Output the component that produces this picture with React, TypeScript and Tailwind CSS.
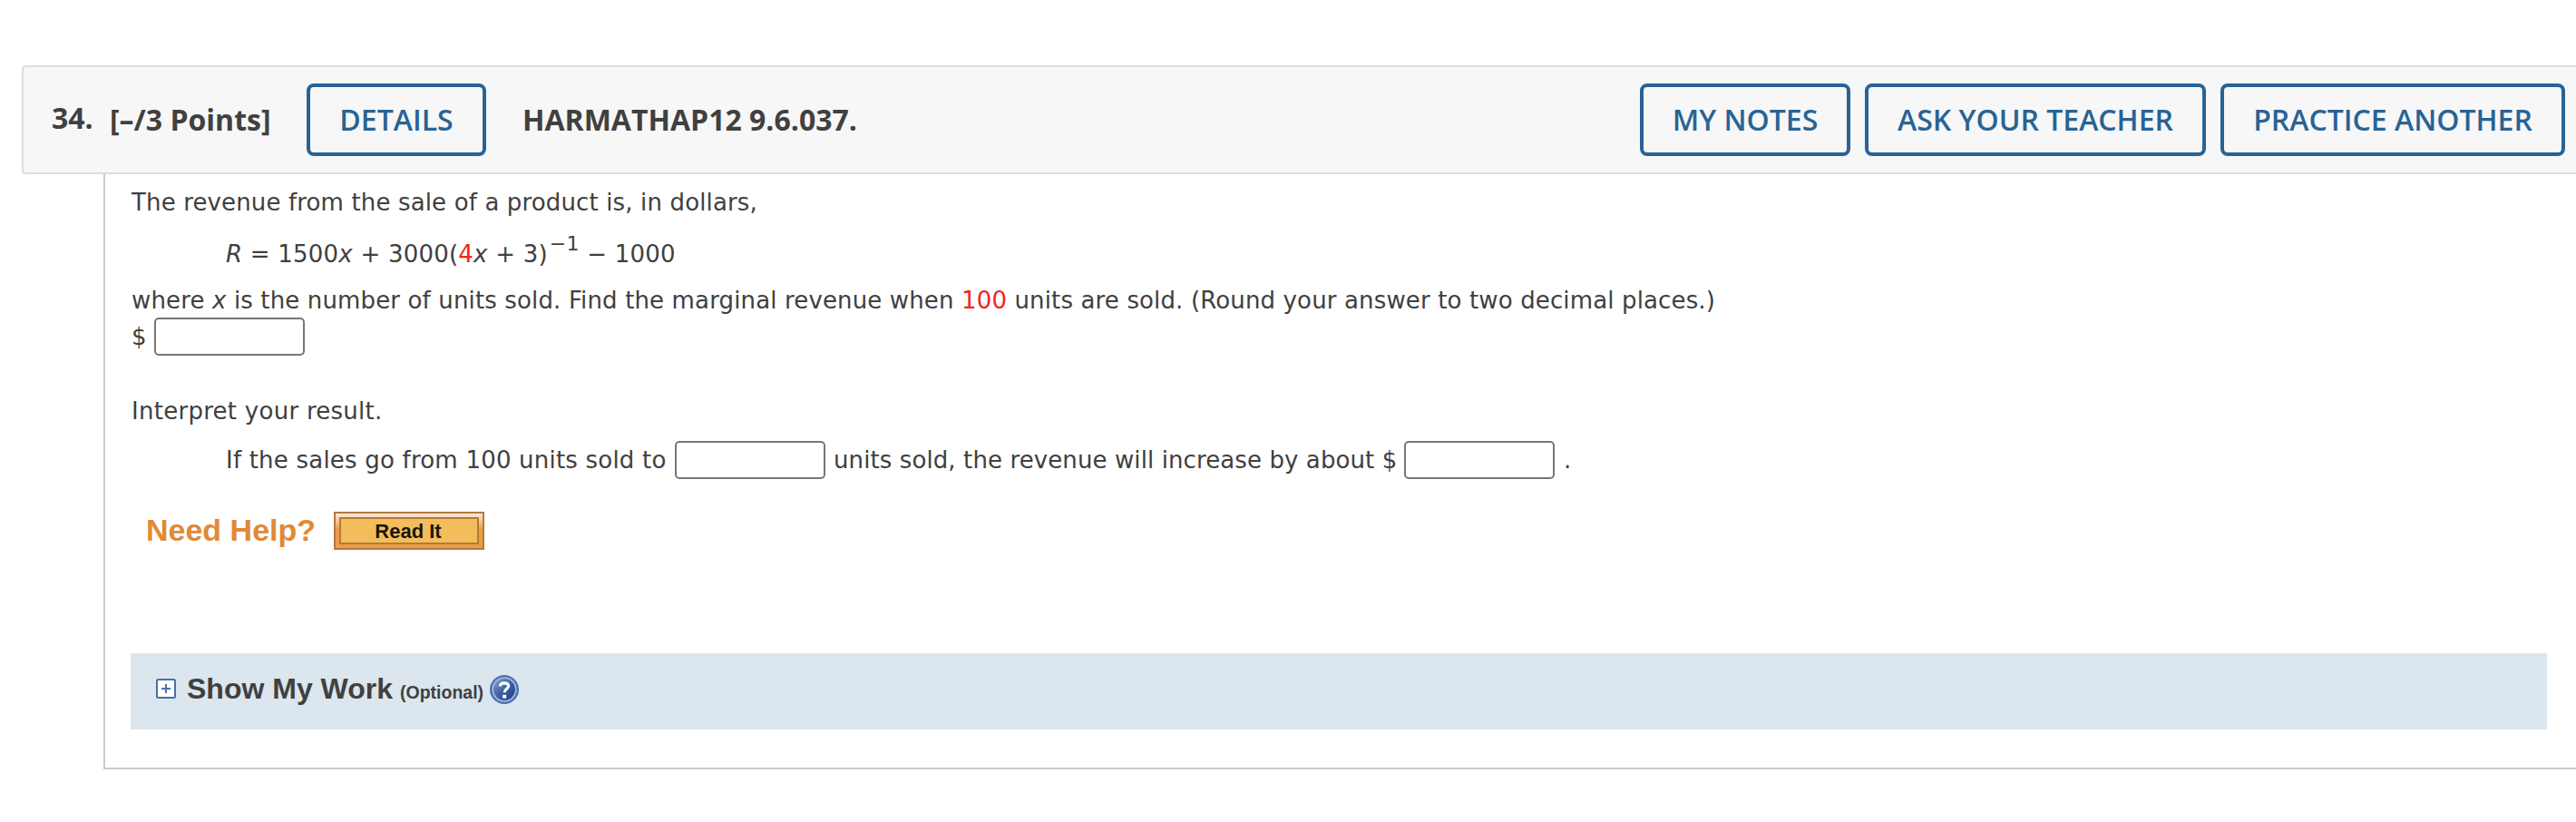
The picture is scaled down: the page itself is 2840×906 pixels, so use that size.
import React, { useState } from 'react';

const actions = [
  { label: 'MY NOTES', width: 'w-[232px]' },
  { label: 'ASK YOUR TEACHER', width: 'w-[376px]' },
  { label: 'PRACTICE ANOTHER', width: 'w-[380px]' },
];

function OutlineButton({ label, width }: { label: string; width: string }) {
  return (
    <button
      className={`h-20 ${width} shrink-0 rounded-lg border-4 border-[#286395] text-[32px] leading-[44px] font-semibold whitespace-nowrap text-[#286395]`}
    >
      {label}
    </button>
  );
}

function AnswerInput({ label }: { label: string }) {
  const [value, setValue] = useState('');

  return (
    <input
      aria-label={label}
      value={value}
      onChange={e => setValue(e.target.value)}
      className="h-[42px] w-[166px] shrink-0 rounded-[5px] border-2 border-[#767676] bg-white px-2 outline-none"
    />
  );
}

function HelpIcon() {
  return (
    <svg viewBox="0 0 32 32" className="ml-[7px] h-8 w-8">
      <defs>
        <linearGradient id="ball" x1="0" y1="0" x2="1" y2="1">
          <stop offset="0" stopColor="#8ba5d6" />
          <stop offset="0.5" stopColor="#3f5fa5" />
          <stop offset="1" stopColor="#1f3a80" />
        </linearGradient>
      </defs>
      <circle cx="16" cy="16" r="16" fill="#4f6fb0" />
      <circle cx="16" cy="16" r="12.8" fill="url(#ball)" stroke="#a3b6dc" strokeWidth="1.8" />
      <path
        d="M11.5 12.4c0-2.5 2-3.5 4.5-3.5s4.6 1.2 4.6 3.4c0 3-4.4 3.1-4.4 6.9"
        fill="none"
        stroke="#fff"
        strokeWidth="3.2"
      />
      <rect x="14.2" y="21.8" width="4" height="3.8" fill="#fff" />
    </svg>
  );
}

export default function App() {
  return (
    <div className="h-[906px] w-[2840px] overflow-hidden bg-white pt-[72px] pl-6 font-['Open_Sans',sans-serif] text-[#404040]">
      <header className="flex h-[120px] items-center rounded-l border-2 border-r-0 border-[#ddd] bg-[#f7f7f7] pr-3 pl-[31px] text-[32px] font-bold whitespace-nowrap">
        <span className="w-16 pb-1">34.</span>
        <span className="w-[217px]">[–/3 Points]</span>
        <OutlineButton label="DETAILS" width="w-[198px]" />
        <span className="ml-10">HARMATHAP12 9.6.037.</span>
        <div className="ml-auto flex gap-4">
          {actions.map(action => (
            <OutlineButton key={action.label} {...action} />
          ))}
        </div>
      </header>

      <main className="ml-[90px] h-[656px] border-b-2 border-l-2 border-[#ccc] pr-8 pl-7 font-['DejaVu_Sans',Verdana,sans-serif] text-[26px] leading-8 tracking-[0.21px] whitespace-nowrap">
        <p className="pt-[15px] pl-px tracking-[0.14px]">The revenue from the sale of a product is, in dollars,</p>
        <p className="mt-[25px] ml-[105px] h-8 tracking-[0.22px]">
          <i>R</i> = 1500<i>x</i> + 3000(<span className="text-[#f0251c]">4</span>
          <i>x</i> + 3)
          <sup className="top-[-13px] ml-0.5 text-[22px] leading-none">−1</sup> − 1000
        </p>
        <p className="mt-[19px] pl-px tracking-[0.14px]">
          where <i>x</i> is the number of units sold. Find the marginal revenue when{' '}
          <span className="text-[#f0251c]">100</span> units are sold. (Round your answer to two decimal places.)
        </p>
        <div className="mt-[3px] flex items-center">
          <span className="w-[26px] pl-px">$</span>
          <AnswerInput label="Marginal revenue" />
        </div>

        <p className="mt-[45px] pl-px tracking-[0.27px]">Interpret your result.</p>
        <div className="mt-[17px] ml-[104px] flex items-center">
          <span className="w-[496px] pl-px">If the sales go from 100 units sold to</span>
          <AnswerInput label="Units sold" />
          <span className="w-[638px] pl-[9px] tracking-[0.1px]">units sold, the revenue will increase by about $</span>
          <AnswerInput label="Revenue increase" />
          <span className="pl-2.5">.</span>
        </div>

        <div className="mt-9 flex items-center font-['Liberation_Sans',Arial,sans-serif] font-bold tracking-normal">
          <span className="w-56 pb-0.5 pl-[17px] text-[34px] text-[#e08a35]">Need Help?</span>
          <button className="h-[42px] w-[166px] border-2 border-[#b37a3c] bg-linear-to-b from-[#fdebd9] to-[#eb9c45] to-45% p-1">
            <span className="flex h-full items-center justify-center border-2 border-[#b37a3c] bg-[#f3bd5c] pt-px pr-0.5 text-[22px] text-[#1c1605]">
              Read It
            </span>
          </button>
        </div>

        <div className="mt-[114px] flex h-[84px] bg-[#dbe6ee] pt-6 pl-7 font-['Liberation_Sans',Arial,sans-serif] font-bold tracking-normal">
          <svg viewBox="0 0 22 22" className="mt-1 mr-3 h-[22px] w-[22px]">
            <rect x="1" y="1" width="20" height="20" rx="1.5" fill="#fff" stroke="#4a6fa5" strokeWidth="2" />
            <path d="M6 11h10M11 6v10" stroke="#4a6fa5" strokeWidth="2" />
          </svg>
          <span className="-mt-px text-[32px]">
            Show My Work<span className="ml-2 text-[19.5px]">(Optional)</span>
          </span>
          <HelpIcon />
        </div>
      </main>
    </div>
  );
}
